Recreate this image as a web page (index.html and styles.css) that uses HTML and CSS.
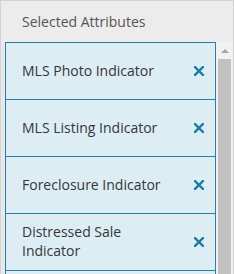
FILE: index.html
```html
<!DOCTYPE html>
<html>
<head>
<meta charset="utf-8">
<link rel="stylesheet" href="styles.css">
</head>
<body>
<div class="panel">
  <div class="panel-header">Selected Attributes</div>
  <div class="panel-body">
    <div class="list">
      <div class="item"><span class="label">MLS Photo Indicator</span><span class="remove"><svg viewBox="0 0 10 10" width="10" height="10"><path d="M1 1L9 9M9 1L1 9" stroke="#1b7ba0" stroke-width="2.4" stroke-linecap="square"/></svg></span></div>
      <div class="item"><span class="label">MLS Listing Indicator</span><span class="remove"><svg viewBox="0 0 10 10" width="10" height="10"><path d="M1 1L9 9M9 1L1 9" stroke="#1b7ba0" stroke-width="2.4" stroke-linecap="square"/></svg></span></div>
      <div class="item"><span class="label">Foreclosure Indicator</span><span class="remove"><svg viewBox="0 0 10 10" width="10" height="10"><path d="M1 1L9 9M9 1L1 9" stroke="#1b7ba0" stroke-width="2.4" stroke-linecap="square"/></svg></span></div>
      <div class="item"><span class="label">Distressed Sale Indicator</span><span class="remove"><svg viewBox="0 0 10 10" width="10" height="10"><path d="M1 1L9 9M9 1L1 9" stroke="#1b7ba0" stroke-width="2.4" stroke-linecap="square"/></svg></span></div>
      <div class="item"></div>
    </div>
    <div class="scrollbar">
      <div class="scroll-up"><span class="arrow"></span></div>
      <div class="thumb"></div>
    </div>
  </div>
</div>
</body>
</html>
```
FILE: styles.css
```css
html, body {
  margin: 0;
  padding: 0;
  background: #ffffff;
  overflow: hidden;
}
body {
  font-family: "Open Sans", "Liberation Sans", sans-serif;
  font-size: 14px;
}
.panel {
  width: 234px;
  box-sizing: border-box;
  border: 1px solid #d2d2d2;
  border-bottom: none;
  background: #e9e9e9;
}
.panel-header {
  height: 41px;
  display: flex;
  align-items: center;
  padding-left: 21px;
  background: #ececec;
  color: #555555;
  font-size: 14px;
}
.panel-body {
  display: flex;
  height: 240px;
  overflow: hidden;
  padding-left: 4px;
}
.list {
  width: 211px;
  flex: none;
}
.item {
  box-sizing: border-box;
  height: 57px;
  display: flex;
  align-items: center;
  background: #dcedf4;
  border: 1px solid #2a7fb0;
  border-top: none;
  padding: 0 11px 2px 16px;
  color: #363636;
  line-height: 19px;
}
.item:first-child {
  height: 58px;
  border-top: 1px solid #2a7fb0;
}
.label {
  flex: 1;
  padding-right: 20px;
}
.remove {
  display: flex;
  width: 10px;
  height: 10px;
  margin-top: 2px;
}
.scrollbar {
  width: 17px;
  flex: none;
  display: flex;
  flex-direction: column;
  background: #f1f1f1;
}
.scroll-up {
  height: 17px;
  display: flex;
  align-items: center;
  justify-content: center;
}
.arrow {
  width: 0;
  height: 0;
  border-left: 4px solid transparent;
  border-right: 4px solid transparent;
  border-bottom: 4px solid #a3a3a3;
}
.thumb {
  flex: 1;
  margin: 0 2px 0 2px;
  background: #c1c1c1;
}
```
